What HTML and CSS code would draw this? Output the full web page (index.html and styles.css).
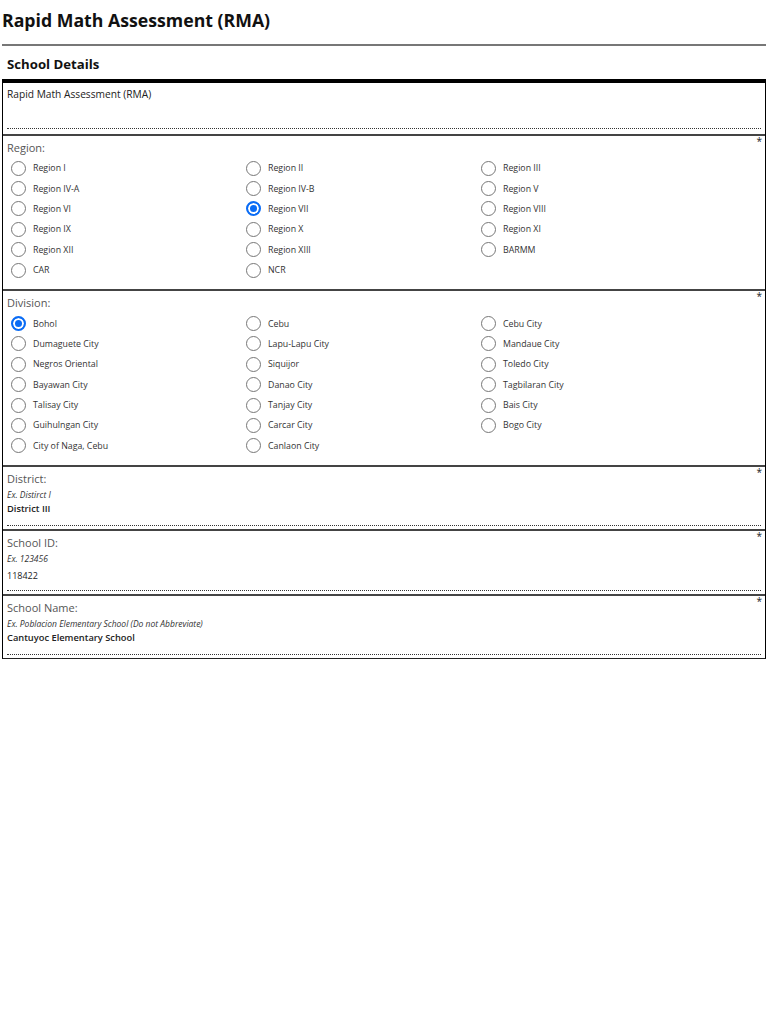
FILE: index.html
```html
<!doctype html>
<html lang="en">
<head>
    <meta name="viewport" content="width=device-width, initial-scale=1.0">
    <meta charset="UTF-8">
    <title>Rapid Math Assessment (RMA)</title>
    <link rel="stylesheet" href="styles.css">
</head>
<body>
<h1 class="form-title">Rapid Math Assessment (RMA)</h1>
<hr class="title-rule">
<h2 class="section-title">School Details</h2>

<div class="form-box">
    <div class="field field-intro">
        <div class="intro-text">Rapid Math Assessment (RMA)</div>
        <div class="dotted"></div>
    </div>

    <div class="field field-choices">
        <span class="req">*</span>
        <div class="label">Region:</div>
        <div class="choices">
            <label class="choice"><span class="radio"></span>Region I</label>
            <label class="choice"><span class="radio"></span>Region II</label>
            <label class="choice"><span class="radio"></span>Region III</label>
            <label class="choice"><span class="radio"></span>Region IV-A</label>
            <label class="choice"><span class="radio"></span>Region IV-B</label>
            <label class="choice"><span class="radio"></span>Region V</label>
            <label class="choice"><span class="radio"></span>Region VI</label>
            <label class="choice"><span class="radio checked"></span>Region VII</label>
            <label class="choice"><span class="radio"></span>Region VIII</label>
            <label class="choice"><span class="radio"></span>Region IX</label>
            <label class="choice"><span class="radio"></span>Region X</label>
            <label class="choice"><span class="radio"></span>Region XI</label>
            <label class="choice"><span class="radio"></span>Region XII</label>
            <label class="choice"><span class="radio"></span>Region XIII</label>
            <label class="choice"><span class="radio"></span>BARMM</label>
            <label class="choice"><span class="radio"></span>CAR</label>
            <label class="choice"><span class="radio"></span>NCR</label>
        </div>
    </div>

    <div class="field field-choices">
        <span class="req">*</span>
        <div class="label">Division:</div>
        <div class="choices">
            <label class="choice"><span class="radio checked"></span>Bohol</label>
            <label class="choice"><span class="radio"></span>Cebu</label>
            <label class="choice"><span class="radio"></span>Cebu City</label>
            <label class="choice"><span class="radio"></span>Dumaguete City</label>
            <label class="choice"><span class="radio"></span>Lapu-Lapu City</label>
            <label class="choice"><span class="radio"></span>Mandaue City</label>
            <label class="choice"><span class="radio"></span>Negros Oriental</label>
            <label class="choice"><span class="radio"></span>Siquijor</label>
            <label class="choice"><span class="radio"></span>Toledo City</label>
            <label class="choice"><span class="radio"></span>Bayawan City</label>
            <label class="choice"><span class="radio"></span>Danao City</label>
            <label class="choice"><span class="radio"></span>Tagbilaran City</label>
            <label class="choice"><span class="radio"></span>Talisay City</label>
            <label class="choice"><span class="radio"></span>Tanjay City</label>
            <label class="choice"><span class="radio"></span>Bais City</label>
            <label class="choice"><span class="radio"></span>Guihulngan City</label>
            <label class="choice"><span class="radio"></span>Carcar City</label>
            <label class="choice"><span class="radio"></span>Bogo City</label>
            <label class="choice"><span class="radio"></span>City of Naga, Cebu</label>
            <label class="choice"><span class="radio"></span>Canlaon City</label>
        </div>
    </div>

    <div class="field">
        <span class="req">*</span>
        <div class="label">District:</div>
        <div class="hint">Ex. Distirct I</div>
        <div class="value bold">District III</div>
        <div class="dotted"></div>
    </div>

    <div class="field">
        <span class="req">*</span>
        <div class="label">School ID:</div>
        <div class="hint">Ex. 123456</div>
        <div class="value">118422</div>
        <div class="dotted"></div>
    </div>

    <div class="field field-last">
        <span class="req">*</span>
        <div class="label">School Name:</div>
        <div class="hint">Ex. Poblacion Elementary School (Do not Abbreviate)</div>
        <div class="value bold">Cantuyoc Elementary School</div>
        <div class="dotted"></div>
    </div>
</div>
</body>
</html>
```

FILE: styles.css
```css
body {
    font-family: "Open Sans", Arial, sans-serif;
    margin: 0;
    padding: 0 2px;
    background-color: #fff;
    color: #111;
}

.form-title {
    font-size: 17.7px;
    font-weight: 700;
    margin: 0;
    padding-top: 8px;
    line-height: 24px;
}

.title-rule {
    border: none;
    border-top: 2px solid #777;
    margin: 12px 0 0 0;
}

.section-title {
    font-size: 13.2px;
    font-weight: 700;
    margin: 0;
    padding: 8px 5px 0;
    line-height: 20px;
}

.form-box {
    margin-top: 5px;
    border-top: 4px solid #000;
    border-left: 1px solid #000;
    border-right: 1px solid #000;
    border-bottom: 1px solid #222;
}

.field {
    position: relative;
    padding: 4px 4px 3px 4px;
    border-bottom: 2px solid #444;
}

.field-last {
    border-bottom: none;
}

.field-intro {
    padding: 4px 4px 5px 4px;
}

.intro-text {
    font-size: 10.2px;
    line-height: 14px;
    color: #222;
    height: 41px;
}

.req {
    position: absolute;
    top: -1px;
    right: 3px;
    font-size: 10px;
    line-height: 12px;
    color: #222;
}

.label {
    font-size: 11px;
    line-height: 16px;
    color: #555;
}

.field-choices {
    padding-top: 4px;
    padding-bottom: 5px;
}

.choices {
    display: grid;
    grid-template-columns: repeat(3, 235px);
    padding: 2px 0 4px 4px;
}

.choice {
    display: flex;
    align-items: center;
    gap: 7px;
    height: 20.4px;
    font-size: 8.8px;
    color: #333;
}

.radio {
    width: 15px;
    height: 15px;
    border: 1px solid #777;
    border-radius: 50%;
    box-sizing: border-box;
    flex-shrink: 0;
}

.radio.checked {
    border: 2px solid #0a6cf5;
    background-color: #0a6cf5;
    box-shadow: inset 0 0 0 2px #fff;
}

.hint {
    font-size: 8.5px;
    font-style: italic;
    line-height: 15px;
    color: #333;
}

.value {
    font-size: 9px;
    line-height: 20px;
    color: #222;
    height: 24px;
}

.value.bold {
    font-size: 9.3px;
    font-weight: 600;
    line-height: 14px;
    height: 23px;
}

.dotted {
    border-top: 1px dotted #333;
}
```
